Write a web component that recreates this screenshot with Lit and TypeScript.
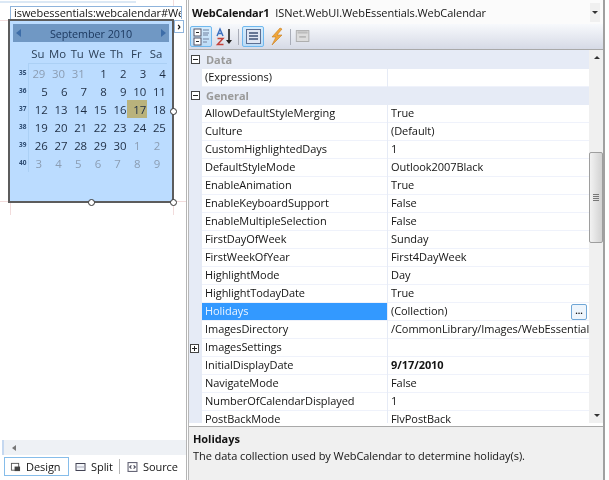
import { LitElement, css, html, svg } from 'lit'
import { customElement } from 'lit/decorators.js'

type Prop = { name: string; value?: string; bold?: boolean; expand?: boolean; selected?: boolean }

const topProps: Prop[] = [{ name: '(Expressions)' }]

const generalProps: Prop[] = [
  { name: 'AllowDefaultStyleMerging', value: 'True' },
  { name: 'Culture', value: '(Default)' },
  { name: 'CustomHighlightedDays', value: '1' },
  { name: 'DefaultStyleMode', value: 'Outlook2007Black' },
  { name: 'EnableAnimation', value: 'True' },
  { name: 'EnableKeyboardSupport', value: 'False' },
  { name: 'EnableMultipleSelection', value: 'False' },
  { name: 'FirstDayOfWeek', value: 'Sunday' },
  { name: 'FirstWeekOfYear', value: 'First4DayWeek' },
  { name: 'HighlightMode', value: 'Day' },
  { name: 'HighlightTodayDate', value: 'True' },
  { name: 'Holidays', value: '(Collection)', selected: true },
  { name: 'ImagesDirectory', value: '/CommonLibrary/Images/WebEssential' },
  { name: 'ImagesSettings', expand: true },
  { name: 'InitialDisplayDate', value: '9/17/2010', bold: true },
  { name: 'NavigateMode', value: 'False' },
  { name: 'NumberOfCalendarDisplayed', value: '1' },
  { name: 'PostBackMode', value: 'FlyPostBack' },
]

const weekdays = ['Su', 'Mo', 'Tu', 'We', 'Th', 'Fr', 'Sa']

// [day, belongs to September]
const weeks: { no: number; days: [number, boolean][] }[] = [
  { no: 35, days: [[29, false], [30, false], [31, false], [1, true], [2, true], [3, true], [4, true]] },
  { no: 36, days: [[5, true], [6, true], [7, true], [8, true], [9, true], [10, true], [11, true]] },
  { no: 37, days: [[12, true], [13, true], [14, true], [15, true], [16, true], [17, true], [18, true]] },
  { no: 38, days: [[19, true], [20, true], [21, true], [22, true], [23, true], [24, true], [25, true]] },
  { no: 39, days: [[26, true], [27, true], [28, true], [29, true], [30, true], [1, false], [2, false]] },
  { no: 40, days: [[3, false], [4, false], [5, false], [6, false], [7, false], [8, false], [9, false]] },
]

const icons = {
  categorized: svg`<rect x="2" y="2" width="7" height="7" fill="#fff" stroke="#556"/><rect x="4" y="5" width="3" height="1" fill="#222"/><rect x="2" y="11" width="7" height="7" fill="#fff" stroke="#556"/><rect x="4" y="14" width="3" height="1" fill="#222"/><path d="M11 3h6M11 6h6M11 8h5M11 12h6M11 15h4" stroke="#8ea2bd" stroke-width="1.5"/>`,
  sorted: svg`<path d="M2 9 5 2l3 7M3.4 6.5h3.2" fill="none" stroke="#3a6fc0" stroke-width="1.4"/><path d="M2.5 11.5h5.5l-5.5 6h6" fill="none" stroke="#c2413b" stroke-width="1.5"/><path d="M14 2v13" stroke="#222" stroke-width="1.6"/><path d="M11 13h6l-3 4z" fill="#222"/>`,
  list: svg`<rect x="2.5" y="2.5" width="14" height="14" fill="#dfe6f3" stroke="#5c6f92"/><path d="M5 6h9M5 9h9M5 12h9" stroke="#3e5277" stroke-width="1.3"/>`,
  bolt: svg`<path d="M13 1 5 10h4l-4 8 10-10h-5l5-6z" fill="#f0a63a" stroke="#c77d20" stroke-width=".6"/>`,
  pages: svg`<rect x="1.5" y="2.5" width="15" height="13" fill="#dcdcdc" stroke="#a6a6a6"/><rect x="3" y="3.5" width="12" height="2.5" fill="#bdbdbd"/><path d="M5 10h8" stroke="#a6a6a6" stroke-width="1.4"/>`,
  design: svg`<rect x="1.5" y="1.5" width="8" height="7.5" fill="#fff" stroke="#555"/><rect x="5" y="5" width="6" height="5" fill="#444"/>`,
  split: svg`<rect x=".5" y="1.5" width="9" height="7" fill="#f3f6fa" stroke="#445"/><path d="M1 5h8" stroke="#aab"/>`,
  source: svg`<rect x=".5" y=".5" width="8" height="8" fill="#fff" stroke="#667"/><path d="M3.5 3 2 4.5 3.5 6M5.5 3 7 4.5 5.5 6" fill="none" stroke="#445"/>`,
}

@customElement('app-root')
export class AppRoot extends LitElement {
  static styles = css`
    :host {
      display: flex;
      width: 609px;
      height: 480px;
      overflow: hidden;
      background: #fff;
      color: #141414;
      font-family: 'Open Sans', 'Noto Sans', sans-serif;
      font-size: 11px;
      letter-spacing: -0.06px;
      filter: blur(0.3px);
    }

    .designer {
      width: 186px;
      flex: none;
      display: flex;
      flex-direction: column;
      border-right: 1px solid #b5b5b5;
    }
    .surface {
      flex: 1;
      position: relative;
      padding: 19px 0 0 8px;
    }
    .topline {
      position: absolute;
      left: 0;
      top: 1px;
      width: 136px;
      height: 2px;
      background: #dbe8f5;
    }
    .guide {
      position: absolute;
      background: #f2dcdc;
    }
    .tag {
      position: absolute;
      left: 10px;
      top: 6px;
      width: 172px;
      height: 13px;
      line-height: 12px;
      padding-left: 3px;
      border: 1px solid #8fb4dc;
      border-bottom: none;
      background: #fff;
      white-space: nowrap;
      overflow: hidden;
      box-sizing: border-box;
    }
    .chevron {
      position: absolute;
      left: 174px;
      top: 20px;
      width: 10px;
      height: 13px;
      border: 1px solid #8fb4dc;
      background: #fff;
      box-sizing: border-box;
      font-size: 10px;
      font-weight: 700;
      line-height: 10px;
      text-align: center;
    }
    .handle {
      position: absolute;
      width: 7px;
      height: 7px;
      border: 1px solid #333;
      border-radius: 50%;
      background: #fff;
      box-sizing: border-box;
    }

    .calendar {
      position: relative;
      width: 166px;
      height: 184px;
      box-sizing: border-box;
      border: 2px solid #5c5c5c;
      background: #bbdcff;
      padding: 3px 3px 0;
    }
    .cal-head {
      display: flex;
      align-items: center;
      justify-content: space-between;
      height: 18px;
      padding: 0 3px;
      background: #7098c4;
      color: #1d3a60;
      font-size: 10.8px;
      font-weight: 500;
    }
    .nav {
      width: 0;
      height: 0;
      border-top: 4.5px solid transparent;
      border-bottom: 4.5px solid transparent;
    }
    .nav.prev {
      border-right: 5px solid #3d6da8;
    }
    .nav.next {
      border-left: 5px solid #3d6da8;
    }
    .cal-grid {
      display: grid;
      grid-template-columns: repeat(7, 19.7px);
      grid-auto-rows: 18px;
      margin: 3px 0 0 15px;
      line-height: 18px;
      font-size: 11.4px;
    }
    .dow {
      text-align: center;
      font-weight: 500;
      color: #2c4058;
    }
    .weeks {
      display: flex;
      margin: 0 0 0 3px;
    }
    .week-nos {
      width: 13px;
      box-sizing: border-box;
      padding: 1px 0 0 3px;
      font-size: 6.5px;
      font-weight: 700;
      color: #2c4a70;
      line-height: 18px;
    }
    .days {
      display: grid;
      grid-template-columns: repeat(7, 19.7px);
      grid-auto-rows: 18px;
      line-height: 19px;
      font-size: 11.4px;
      border-left: 1px solid #abd0f5;
      border-top: 1px solid #abd0f5;
      margin-left: -1px;
    }
    .day {
      text-align: right;
      padding-right: 1px;
      font-weight: 500;
      color: #1f2e44;
    }
    .day.other {
      text-align: center;
      padding-right: 0;
      font-weight: 400;
      color: #8b9db3;
    }
    .day.today {
      background: #b9b27c;
    }

    .tabs {
      height: 40px;
      flex: none;
    }
    .hscroll {
      height: 15px;
      margin: 0 0 0 2px;
      background: #eef1f5;
      border-left: 2px solid #c5d8f0;
      display: flex;
      align-items: center;
      padding-left: 8px;
    }
    .hscroll i {
      width: 0;
      height: 0;
      border-top: 3.5px solid transparent;
      border-bottom: 3.5px solid transparent;
      border-right: 4px solid #777;
    }
    .tabbar {
      display: flex;
      align-items: center;
      padding: 2px 0 0 4px;
    }
    .tab {
      display: flex;
      align-items: center;
      gap: 5px;
      height: 19px;
      padding: 0 3px 0 5px;
      box-sizing: border-box;
      border: 1px solid transparent;
    }
    .tab svg {
      width: 11px;
      height: 10px;
    }
    .tab.active {
      width: 65px;
      border-color: #86bdea;
    }
    .tabsep {
      width: 1px;
      height: 15px;
      background: #b5b5b5;
      margin: 0 1px 0 2px;
    }

    .props {
      width: 417px;
      flex: none;
      margin-left: 1px;
      display: flex;
      flex-direction: column;
      border-left: 1px solid #b8b8b8;
      border-right: 2px solid #a0a0a0;
      box-sizing: border-box;
    }
    .selector {
      display: flex;
      align-items: center;
      height: 24px;
      flex: none;
      padding-left: 3px;
      background: #fbfbfb;
      position: relative;
    }
    .selector b {
      font-weight: 700;
      letter-spacing: -0.2px;
      margin-right: 6px;
    }
    .drop {
      margin-left: auto;
      margin-right: 3px;
      width: 10px;
      height: 19px;
      background: #f0f0f0;
      display: flex;
      align-items: center;
      justify-content: center;
    }
    .drop i,
    .sb-arrow.down {
      width: 0;
      height: 0;
      border-left: 3px solid transparent;
      border-right: 3px solid transparent;
      border-top: 3px solid #333;
    }
    .toolbar {
      display: flex;
      align-items: center;
      height: 26px;
      flex: none;
      padding-left: 1px;
      gap: 1px;
      background: linear-gradient(#f7f9fc, #d6dae6);
      border-bottom: 1px solid #a9a9a9;
      box-sizing: border-box;
    }
    .tool {
      width: 22px;
      height: 21px;
      display: flex;
      align-items: center;
      justify-content: center;
      box-sizing: border-box;
      border: 1px solid transparent;
      border-radius: 2px;
    }
    .tool.small {
      width: 18px;
    }
    .tool svg {
      width: 19px;
      height: 19px;
    }
    .tool.on {
      background: linear-gradient(#d7ecfc, #bcdcf7);
      border-color: #6fb8ee;
    }
    .toolsep {
      width: 1px;
      height: 16px;
      background: #a9adb8;
      margin: 0 2px;
    }

    .body {
      height: 373px;
      flex: none;
      display: flex;
      overflow: hidden;
    }
    .rows {
      width: 400px;
      flex: none;
      background: #e6ebf6;
      padding-top: 1px;
    }
    .row {
      display: grid;
      grid-template-columns: 13px 185px 1fr;
      height: 18px;
      line-height: 16px;
      box-sizing: border-box;
    }
    .row .name,
    .row .value {
      background: #fff;
      border-bottom: 1px solid #eff2fb;
      padding-left: 3px;
      white-space: nowrap;
      overflow: hidden;
    }
    .row .value {
      margin-left: 1px;
      display: flex;
      align-items: flex-start;
      position: relative;
    }
    .row.selected .name {
      background: #3399ff;
      color: #e9f3ff;
    }
    .row .strong {
      font-weight: 700;
    }
    .more {
      position: absolute;
      right: 2px;
      top: 1px;
      width: 14px;
      height: 14px;
      border: 1px solid #6fa6d6;
      border-radius: 2px;
      background: #eef5fc;
      font-size: 9px;
      line-height: 11px;
      text-align: center;
      font-weight: 700;
    }
    .cat {
      display: flex;
      align-items: center;
      height: 18px;
      padding: 0 0 1px 1px;
      box-sizing: border-box;
      color: #9a9a9a;
      font-weight: 700;
      gap: 5px;
    }
    .cat span {
      margin-left: 1px;
    }
    .box {
      width: 9px;
      height: 9px;
      border: 1px solid #444;
      box-sizing: border-box;
      position: relative;
      background: #fff;
      display: block;
    }
    .box::before {
      content: '';
      position: absolute;
      left: 1px;
      right: 1px;
      top: 3px;
      height: 1px;
      background: #222;
    }
    .box.plus::after {
      content: '';
      position: absolute;
      top: 1px;
      bottom: 1px;
      left: 3px;
      width: 1px;
      background: #222;
    }
    .gutter {
      display: flex;
      align-items: center;
      padding-left: 1px;
    }

    .scrollbar {
      flex: 1;
      background: #f0f0f0;
      position: relative;
    }
    .sb-arrow {
      position: absolute;
      left: 5px;
    }
    .sb-arrow.up {
      top: 6px;
      width: 0;
      height: 0;
      border-left: 3px solid transparent;
      border-right: 3px solid transparent;
      border-bottom: 3px solid #333;
    }
    .sb-arrow.down {
      bottom: 6px;
    }
    .thumb {
      position: absolute;
      left: 0;
      right: 0;
      top: 102px;
      height: 91px;
      box-sizing: border-box;
      border: 1px solid #9e9e9e;
      border-radius: 2px;
      background: linear-gradient(90deg, #f2f2f2, #d2d2d2);
      display: flex;
      align-items: center;
      justify-content: center;
    }
    .thumb i {
      width: 6px;
      height: 8px;
      background: repeating-linear-gradient(#777 0 1px, transparent 1px 2px);
    }

    .help {
      flex: 1;
      margin-top: 3px;
      border-top: 1px solid #a9a9a9;
      background: #f0f0f0;
      padding: 3px 0 0 4px;
      line-height: 17px;
    }
    .help b {
      display: block;
      font-weight: 700;
    }
  `

  private renderProp(p: Prop) {
    return html`<div class="row ${p.selected ? 'selected' : ''}">
      <div class="gutter">${p.expand ? html`<span class="box plus"></span>` : ''}</div>
      <div class="name">${p.name}</div>
      <div class="value">
        <span class=${p.bold ? 'strong' : ''}>${p.value ?? ''}</span>
        ${p.selected ? html`<span class="more">...</span>` : ''}
      </div>
    </div>`
  }

  private renderDesigner() {
    return html`<div class="designer">
      <div class="surface">
        <div class="topline"></div>
        <div class="guide" style="left:0;top:20px;width:8px;height:1px"></div>
        <div class="guide" style="left:0;top:201px;width:186px;height:1px"></div>
        <div class="guide" style="left:10px;top:203px;width:1px;height:12px"></div>
        <div class="guide" style="left:173px;top:0;width:1px;height:215px"></div>
        <div class="tag">iswebessentials:webcalendar#WebCalendar1</div>
        <div class="chevron">›</div>
        <div class="calendar">
          <div class="cal-head">
            <span class="nav prev"></span>
            <span>September 2010</span>
            <span class="nav next"></span>
          </div>
          <div class="cal-grid">${weekdays.map((d) => html`<div class="dow">${d}</div>`)}</div>
          <div class="weeks">
            <div class="week-nos">${weeks.map((w) => html`<div>${w.no}</div>`)}</div>
            <div class="days">
              ${weeks.map((w) =>
                w.days.map(
                  ([d, current]) =>
                    html`<div class="day ${current ? '' : 'other'} ${current && d === 17 ? 'today' : ''}">${d}</div>`,
                ),
              )}
            </div>
          </div>
        </div>
        <div class="handle" style="left:170px;top:108px"></div>
        <div class="handle" style="left:88px;top:199px"></div>
        <div class="handle" style="left:170px;top:199px"></div>
      </div>
      <div class="tabs">
        <div class="hscroll"><i></i></div>
        <div class="tabbar">
          <div class="tab active"><svg viewBox="0 0 12 11">${icons.design}</svg>Design</div>
          <div class="tab"><svg viewBox="0 0 10 10">${icons.split}</svg>Split</div>
          <div class="tabsep"></div>
          <div class="tab"><svg viewBox="0 0 9 9">${icons.source}</svg>Source</div>
        </div>
      </div>
    </div>`
  }

  private renderProps() {
    return html`<div class="props">
      <div class="selector">
        <b>WebCalendar1</b><span>ISNet.WebUI.WebEssentials.WebCalendar</span>
        <div class="drop"><i></i></div>
      </div>
      <div class="toolbar">
        <div class="tool on"><svg viewBox="0 0 19 19">${icons.categorized}</svg></div>
        <div class="tool"><svg viewBox="0 0 19 19">${icons.sorted}</svg></div>
        <div class="toolsep"></div>
        <div class="tool on"><svg viewBox="0 0 19 19">${icons.list}</svg></div>
        <div class="tool"><svg viewBox="0 0 19 19">${icons.bolt}</svg></div>
        <div class="toolsep"></div>
        <div class="tool small"><svg viewBox="0 0 19 19">${icons.pages}</svg></div>
      </div>
      <div class="body">
        <div class="rows">
          <div class="cat"><span class="box"></span><span>Data</span></div>
          ${topProps.map((p) => this.renderProp(p))}
          <div class="cat"><span class="box"></span><span>General</span></div>
          ${generalProps.map((p) => this.renderProp(p))}
        </div>
        <div class="scrollbar">
          <div class="sb-arrow up"></div>
          <div class="thumb"><i></i></div>
          <div class="sb-arrow down"></div>
        </div>
      </div>
      <div class="help">
        <b>Holidays</b>
        The data collection used by WebCalendar to determine holiday(s).
      </div>
    </div>`
  }

  render() {
    return html`${this.renderDesigner()}${this.renderProps()}`
  }
}

declare global {
  interface HTMLElementTagNameMap {
    'app-root': AppRoot
  }
}
